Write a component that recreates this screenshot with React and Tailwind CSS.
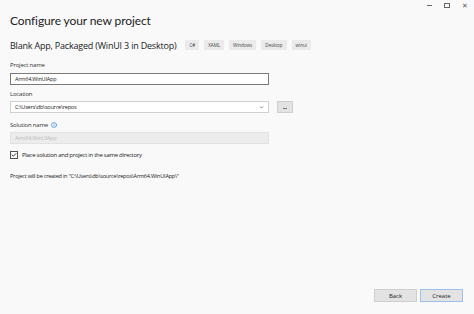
import { Check, Info, ChevronDown } from 'lucide-react';

const tags = ['C#', 'XAML', 'Windows', 'Desktop', 'winui'];

const App = () => {
    return (
        <div
            className="w-[474px] h-[314px] bg-[#f9f9f9] text-[#1b1b1b] flex flex-col overflow-hidden"
            style={{ fontFamily: '"Open Sans", "Noto Sans", sans-serif' }}
        >
            {/* Title bar */}
            <div className="flex justify-end items-center h-[10px] pr-[6px] gap-[12px] text-[#444]">
                <span className="block w-[5px] h-px bg-[#666]" />
                <span className="block w-[6px] h-[5px] border border-[#666]" />
                <span className="text-[7px] leading-none text-[#555]">✕</span>
            </div>

            <div className="px-[10px] flex flex-col">
                <h1
                    className="text-[12px] leading-[14px] font-normal mt-[4px] tracking-[-0.1px] text-[#222]"
                    style={{ fontFamily: 'Lato, "Open Sans", sans-serif' }}
                >
                    Configure your new project
                </h1>

                <div className="flex items-center mt-[12px] h-[10px]">
                    <span className="text-[9px] leading-none mr-[9px] tracking-[-0.2px] text-[#222]">
                        Blank App, Packaged (WinUI 3 in Desktop)
                    </span>
                    <div className="flex gap-[5px]">
                        {tags.map((t) => (
                            <span
                                key={t}
                                className="bg-[#ebebeb] text-[4.5px] leading-none px-[4px] py-[3px] text-[#444]"
                            >
                                {t}
                            </span>
                        ))}
                    </div>
                </div>

                {/* Project name */}
                <label className="text-[6px] leading-[6px] mt-[12px] tracking-[-0.2px] text-[#333]">Project name</label>
                <div className="mt-[5px] w-[259px] h-[12px] bg-white border border-[#7a7a7a] flex items-center px-[4px] text-[5.5px] tracking-[-0.2px] text-[#222]">
                    Arm64.WinUIApp
                </div>

                {/* Location */}
                <label className="text-[6px] leading-[6px] mt-[6px] tracking-[-0.2px] text-[#333]">Location</label>
                <div className="mt-[4px] flex items-center gap-[8px]">
                    <div className="w-[259px] h-[12px] bg-white border border-[#d0d0d0] flex items-center justify-between px-[4px] text-[5.5px] tracking-[-0.2px] text-[#222]">
                        <span>C:\Users\db\source\repos</span>
                        <ChevronDown size={5} strokeWidth={4} className="text-[#777]" />
                    </div>
                    <div className="w-[16px] h-[12px] bg-[#e3e3e3] border border-[#cfcfcf] flex items-end justify-center pb-[3px]">
                        <span className="block w-[4px] h-px bg-[#777]" />
                    </div>
                </div>

                {/* Solution name */}
                <div className="flex items-center mt-[9px] gap-[3px] h-[6px]">
                    <label className="text-[6px] leading-[6px] tracking-[-0.2px] text-[#333]">Solution name</label>
                    <Info size={6} className="text-[#2f7bd8]" strokeWidth={2.5} />
                </div>
                <div className="mt-[4px] w-[259px] h-[12px] bg-[#ececec] border border-[#e2e2e2] flex items-center px-[4px] text-[5.5px] tracking-[-0.2px] text-[#bcbcbc]">
                    Arm64.WinUIApp
                </div>

                {/* Checkbox */}
                <div className="flex items-center mt-[7px] gap-[4px] h-[8px]">
                    <div className="w-[8px] h-[8px] bg-white border border-[#555] flex items-center justify-center">
                        <Check size={6} strokeWidth={3.5} className="text-[#222]" />
                    </div>
                    <span className="text-[6px] leading-none tracking-[-0.28px] text-[#222]">
                        Place solution and project in the same directory
                    </span>
                </div>

                <p className="text-[5.6px] leading-[6px] mt-[14px] tracking-[-0.25px] text-[#222]">
                    Project will be created in "C:\Users\db\source\repos\Arm64.WinUIApp\"
                </p>
            </div>

            {/* Footer buttons */}
            <div className="mt-auto flex justify-end gap-[3px] pr-[11px] pb-[12px]">
                <button className="w-[43px] h-[13px] bg-[#e3e3e3] border border-[#cfcfcf] text-[6px] leading-none text-[#222]">
                    Back
                </button>
                <button className="w-[43px] h-[13px] bg-[#e3e3e3] border border-[#9cc0ea] text-[6px] leading-none text-[#222]">
                    Create
                </button>
            </div>
        </div>
    );
};

export default App;
